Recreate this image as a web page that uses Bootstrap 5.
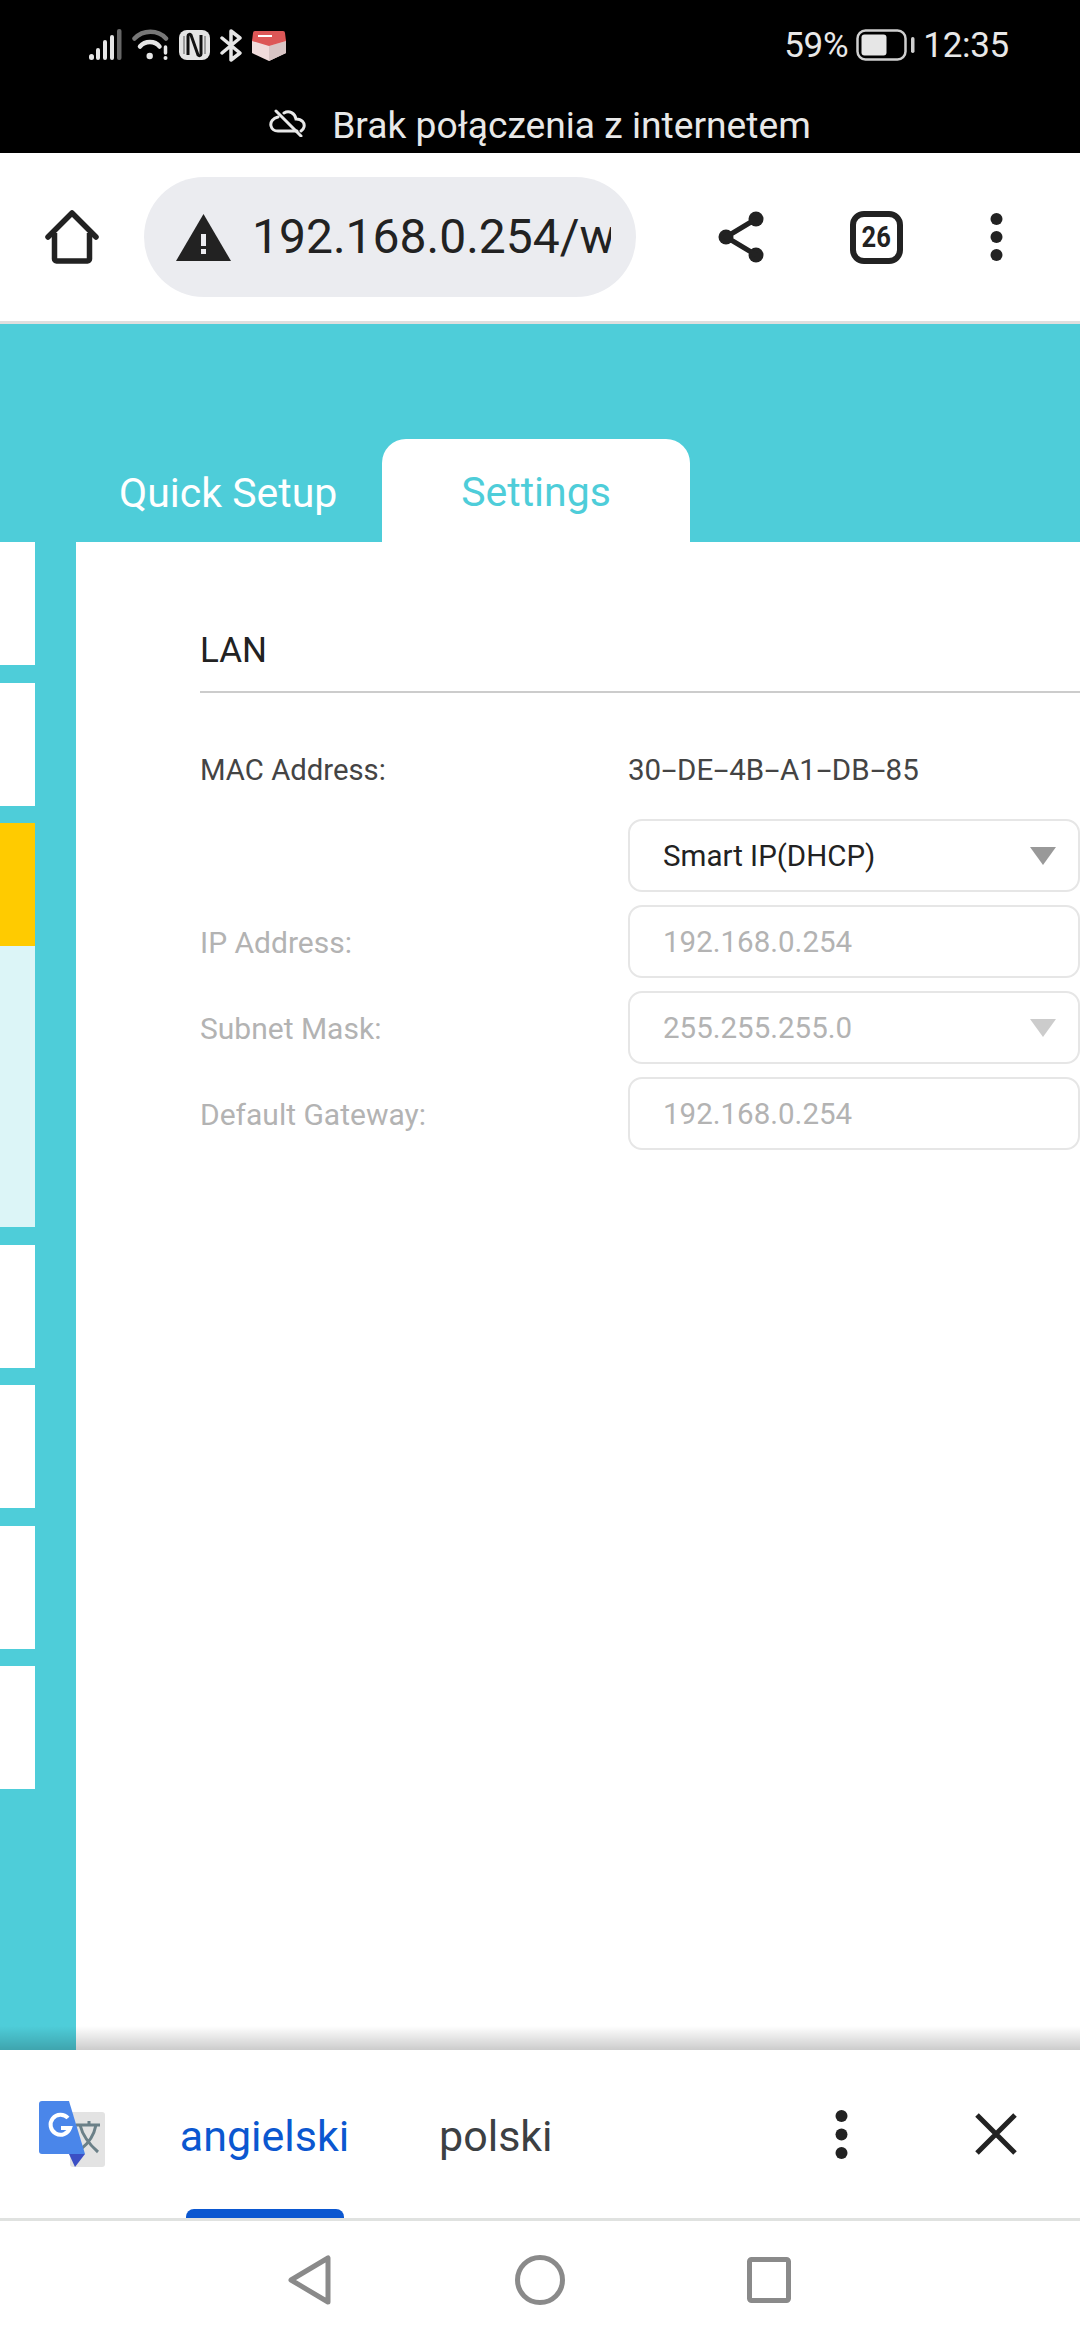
<!DOCTYPE html>
<html lang="pl">
<head>
<meta charset="utf-8">
<title>LAN</title>
<link href="https://cdn.jsdelivr.net/npm/bootstrap@5.3.0/dist/css/bootstrap.min.css" rel="stylesheet">
<style>
html,body{margin:0;padding:0;background:#fff}
body{width:1080px;height:2340px;overflow:hidden;font-family:Roboto,"Liberation Sans",sans-serif;color:#222}
.phone{width:1080px;height:2340px}
.sys-bar{height:153px;background:#000;color:#e8e8e8;flex:none;padding-top:29px}
.sys-top{height:32px;padding-left:88px;padding-right:71px}
.sys-top svg{display:block}
.sys-icons{gap:10px}
.sys-text{font-size:35px;line-height:32px;padding-top:2px;letter-spacing:-.3px}
.off-row{height:28px;margin-top:48px;font-size:37.2px;line-height:28px;gap:25px}
.off-row span{padding-top:3px}
.toolbar{height:171px;border-bottom:3px solid #dfdfdf;flex:none;padding-left:45px}
.url-pill{width:492px;height:120px;margin-left:45px;background:#ebecf0;border-radius:60px;padding-left:32px;padding-right:25px;gap:21px}
.url-text{font-size:48px;line-height:60px;white-space:nowrap;overflow:hidden;flex:1;min-width:0}
.tab-count{width:53px;height:53px;border:6px solid #222;border-radius:14px;margin-left:86px;font-weight:700;font-size:30px;line-height:1}
.tab-count span{display:block;transform:scaleX(.85)}
.web{background:#4ecdd9;min-height:0;flex:1 1 auto}
.web-shade{height:24px;background:linear-gradient(rgba(0,0,0,0),rgba(0,0,0,.2));pointer-events:none}
.tabs-row{height:218px;flex:none;padding-left:119px}
.nav-quick,.nav-settings{font-size:41px;line-height:50px}
.nav-quick{color:#fff;margin-bottom:24px;width:263px}
.nav-settings{width:308px;height:103px;background:#fff;color:#4ecdd9;border-radius:24px 24px 0 0;padding-top:28px;text-align:center}
.main-row{gap:41px;min-height:0}
.side{width:35px;gap:17.5px}
.side-item{height:123px;background:#fff}
.side-active{background:#ffcb00}
.side-sub{height:281px;background:#dcf5f7;margin-top:-17.5px}
.panel{background:#fff;padding-left:124px}
.lan-head{height:151px;border-bottom:2px solid #ccc;font-size:35px;line-height:46px;padding-top:86px;color:#222}
.form-rows{margin-top:40px;gap:13px}
.frow{height:73px}
.flabel{width:428px;font-size:30px;color:#444;flex:none;padding-top:2px}
.flabel-mac{font-size:29.3px}
.fvalue{font-size:29.5px;color:#444;padding-top:2px}
.dash{display:inline-block;transform:scaleX(1.8);margin:0 3.9px}
.flabel.is-off{color:#b3b3b3}
.fbox{width:452px;height:73px;border:2px solid #e6e6e6;border-radius:14px;padding:0 22px 0 33px;font-size:29.5px;background:#fff;color:#222}
.fbox span{padding-top:2px}
.fbox.is-off{color:#b3b3b3}
.trans-bar{height:171px;border-bottom:3px solid #e0e2e0;flex:none;padding-left:39px;background:#fff}
.t-logo{width:66px}
.t-tab{margin-left:75px;width:169px}
.t-text{font-size:43px;line-height:56px;margin-top:auto;margin-bottom:auto;padding-top:12px}
.t-on{color:#0b57d0}
.t-off{color:#3c4043}
.t-line{height:9px;width:158px;background:#0b57d0;border-radius:8px 8px 0 0}
.t-second{margin-left:90px;padding-bottom:9px}
.t-dots{margin-right:127px;height:168px}
.t-close{margin-right:63px}
.navbar-sys{height:119px;flex:none;padding-left:288px;padding-bottom:2px}
</style>
</head>
<body>
<div class="phone d-flex flex-column">
  <div class="sys-bar">
    <div class="sys-top d-flex align-items-center justify-content-between">
      <div class="sys-icons d-flex align-items-center">
        <svg width="34" height="32" viewBox="0 0 34 32"><g fill="#e6e6e6"><rect x="1" y="25" width="5" height="6" rx="2.5"/><rect x="8" y="19" width="4" height="12" rx="2"/><rect x="15" y="11" width="4" height="20" rx="2"/><rect x="22" y="6" width="4" height="25" rx="2"/></g><rect x="29" y="0" width="4.500" height="31" rx="2" fill="#666"/></svg>
        <svg width="37" height="33" viewBox="0 0 37 33"><path d="M2.500 9.500C11 .5 26 .5 34 9.500" fill="none" stroke="#777" stroke-width="4.500" stroke-linecap="round"/><path d="M8 17.500C13 11.500 23 11.500 27.500 17.500" fill="none" stroke="#e6e6e6" stroke-width="4.500" stroke-linecap="round"/><circle cx="17.700" cy="27" r="3.200" fill="#e6e6e6"/><path d="M33.500 18v6" stroke="#e6e6e6" stroke-width="3.500" stroke-linecap="round"/><circle cx="33.500" cy="29" r="2" fill="#e6e6e6"/></svg>
        <svg width="31" height="32" viewBox="0 0 31 32"><rect x="0" y="1" width="31" height="30" rx="8" fill="#e4e4e4"/><path d="M9 26V7c0-2 2-2 3-1l7 20c1 1 3 1 3-1V6" fill="none" stroke="#111" stroke-width="3"/><path d="M5 25V7M26 25V7" stroke="#888" stroke-width="1.500"/></svg>
        <svg width="22" height="33" viewBox="0 0 22 33"><path d="M2 9l18 15-9 7V2l9 7L2 24" fill="none" stroke="#e6e6e6" stroke-width="3.500" stroke-linejoin="round" stroke-linecap="round"/></svg>
        <svg width="34" height="31" viewBox="0 0 34 31"><path d="M0 11L6 1h22l6 10v12l-17 8L0 23z" fill="#f1dcdc"/><path d="M17 16l17-5v12l-17 8z" fill="#d9c5c5"/><path d="M3 1h28a2 2 0 0 1 2 2l1 8-17 5L0 11l1-8a2 2 0 0 1 2-2z" fill="#dd5757"/><path d="M6 6h14" stroke="#fff" stroke-width="2"/></svg>
      </div>
      <div class="d-flex align-items-center">
        <span class="sys-text">59%</span>
        <svg class="mx-2" width="59" height="32" viewBox="0 0 59 32"><rect x="1.500" y="1.500" width="48" height="29" rx="8" fill="none" stroke="#cfcfcf" stroke-width="2.500"/><rect x="5.500" y="5.500" width="25" height="21" rx="3" fill="#e6e6e6"/><rect x="55" y="8" width="3.500" height="16" rx="1.700" fill="#cfcfcf"/></svg>
        <span class="sys-text">12:35</span>
      </div>
    </div>
    <div class="off-row d-flex align-items-center justify-content-center">
      <svg width="38" height="28" viewBox="0 0 38 28"><path d="M9 8C4 9 1 13 2 17c1 4 4 5 7 5h19M15 4c5-3 11 0 12 6 6 0 9 4 8 8-.4 2-1.500 3-3 4" fill="none" stroke="#e8e8e8" stroke-width="3" stroke-linecap="round"/><path d="M7 2l25 25" stroke="#e8e8e8" stroke-width="3" stroke-linecap="round"/></svg>
      <span>Brak połączenia z internetem</span>
    </div>
  </div>

  <div class="toolbar d-flex align-items-center">
    <svg width="54" height="54" viewBox="0 0 54 54"><path d="M3 27L27 3l24 24" fill="none" stroke="#222" stroke-width="5.500" stroke-linecap="round" stroke-linejoin="round"/><path d="M9.500 23v26a2 2 0 0 0 2 2h31a2 2 0 0 0 2-2V23" fill="none" stroke="#222" stroke-width="5.500"/></svg>
    <div class="url-pill d-flex align-items-center">
      <svg width="55" height="47" viewBox="0 0 55 47" style="flex:none"><path d="M27.500 0L55 47H0z" fill="#222"/><rect x="25" y="20" width="5" height="12" fill="#ebecf0"/><rect x="25" y="35" width="5" height="5" fill="#ebecf0"/></svg>
      <span class="url-text">192.168.0.254/web</span>
    </div>
    <svg class="ms-auto" width="46" height="52" viewBox="0 0 46 52"><g fill="#222"><circle cx="38" cy="8" r="7.500"/><circle cx="8" cy="26" r="7.500"/><circle cx="38" cy="44" r="7.500"/></g><path d="M38 8L8 26l30 18" fill="none" stroke="#222" stroke-width="5"/></svg>
    <div class="tab-count d-flex align-items-center justify-content-center"><span>26</span></div>
    <svg style="margin-left:87px;margin-right:77px" width="13" height="48" viewBox="0 0 13 48"><g fill="#222"><circle cx="6.500" cy="6" r="6"/><circle cx="6.500" cy="24" r="6"/><circle cx="6.500" cy="42" r="6"/></g></svg>
  </div>

  <div class="web d-flex flex-column position-relative overflow-hidden">
    <div class="tabs-row d-flex align-items-end">
      <div class="nav-quick">Quick Setup</div>
      <div class="nav-settings">Settings</div>
    </div>
    <div class="main-row d-flex flex-grow-1">
      <div class="side d-flex flex-column">
        <div class="side-item"></div>
        <div class="side-item"></div>
        <div class="side-item side-active"></div>
        <div class="side-sub"></div>
        <div class="side-item"></div>
        <div class="side-item"></div>
        <div class="side-item"></div>
        <div class="side-item"></div>
      </div>
      <div class="panel flex-grow-1">
        <div class="lan-head">LAN</div>
        <div class="form-rows d-flex flex-column">
          <div class="frow d-flex align-items-center"><div class="flabel flabel-mac">MAC Address:</div><div class="fvalue">30<span class="dash">-</span>DE<span class="dash">-</span>4B<span class="dash">-</span>A1<span class="dash">-</span>DB<span class="dash">-</span>85</div></div>
          <div class="frow d-flex align-items-center"><div class="flabel"></div><div class="fbox d-flex align-items-center justify-content-between"><span>Smart IP(DHCP)</span><svg width="26" height="18" viewBox="0 0 26 18"><path d="M0 0h26L13 18z" fill="#999"/></svg></div></div>
          <div class="frow d-flex align-items-center"><div class="flabel is-off">IP Address:</div><div class="fbox is-off d-flex align-items-center"><span>192.168.0.254</span></div></div>
          <div class="frow d-flex align-items-center"><div class="flabel is-off">Subnet Mask:</div><div class="fbox is-off d-flex align-items-center justify-content-between"><span>255.255.255.0</span><svg width="26" height="18" viewBox="0 0 26 18"><path d="M0 0h26L13 18z" fill="#ccc"/></svg></div></div>
          <div class="frow d-flex align-items-center"><div class="flabel is-off">Default Gateway:</div><div class="fbox is-off d-flex align-items-center"><span>192.168.0.254</span></div></div>
        </div>
      </div>
    </div>
    <div class="web-shade position-absolute bottom-0 start-0 end-0"></div>
  </div>

  <div class="trans-bar d-flex">
    <svg class="t-logo align-self-start" style="margin-top:51px" width="66" height="66" viewBox="0 0 66 66"><rect x="31" y="11" width="35" height="55" rx="3" fill="#e3e3e3"/><path d="M50 20v3M37 24h24M41 24c3 12 10 20 18 27M57 24c-2 10-7 18-15 24" fill="none" stroke="#6b8088" stroke-width="3"/><path d="M30 53l6 13 10-13z" fill="#3b4fc4"/><path d="M3 0h27l16 53H3a3 3 0 0 1-3-3V3a3 3 0 0 1 3-3z" fill="#4a86ea"/><path d="M29 17a10 10 0 1 0 2 10h-9" fill="none" stroke="#fff" stroke-width="4"/></svg>
    <div class="t-tab d-flex flex-column align-items-center">
      <span class="t-text t-on">angielski</span>
      <span class="t-line"></span>
    </div>
    <div class="t-second d-flex align-items-center"><span class="t-text t-off">polski</span></div>
    <div class="t-dots d-flex align-items-center ms-auto"><svg width="13" height="49" viewBox="0 0 13 49"><g fill="#222"><circle cx="6.500" cy="6" r="6"/><circle cx="6.500" cy="24.500" r="6"/><circle cx="6.500" cy="43" r="6"/></g></svg></div>
    <div class="t-close d-flex align-items-center"><svg width="42" height="42" viewBox="0 0 42 42"><path d="M2 2l38 38M40 2L2 40" stroke="#222" stroke-width="5"/></svg></div>
  </div>

  <div class="navbar-sys d-flex align-items-center">
    <svg width="43" height="50" viewBox="0 0 43 50"><path d="M40 3v44L3 25z" fill="none" stroke="#8a8a8a" stroke-width="5" stroke-linejoin="round"/></svg>
    <svg style="margin-left:184px" width="50" height="50" viewBox="0 0 50 50"><circle cx="25" cy="25" r="22.500" fill="none" stroke="#8a8a8a" stroke-width="5"/></svg>
    <svg style="margin-left:182px" width="44" height="46" viewBox="0 0 44 46"><rect x="2.500" y="2.500" width="39" height="41" rx="2" fill="none" stroke="#8a8a8a" stroke-width="5"/></svg>
  </div>
</div>
</body>
</html>
